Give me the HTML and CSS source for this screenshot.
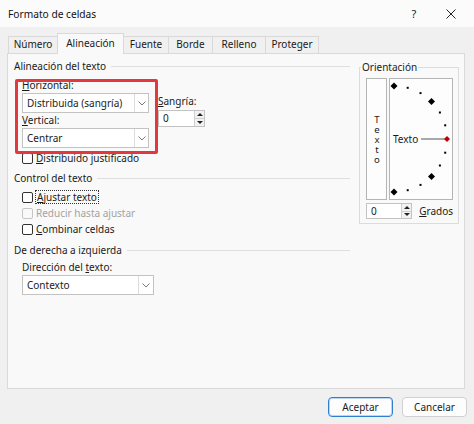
FILE: index.html
```html
<!DOCTYPE html>
<html lang="es">
<head>
<meta charset="utf-8">
<title>Formato de celdas</title>
<link rel="stylesheet" href="styles.css">
</head>
<body>
<div class="window">
  <div class="titlebar">
    <span class="title">Formato de celdas</span>
    <span class="help">?</span>
    <svg class="close" width="10" height="10" viewBox="0 0 10 10"><path d="M0.5 0.5 L9.5 9.5 M9.5 0.5 L0.5 9.5" stroke="#222" stroke-width="1" fill="none"/></svg>
  </div>
  <div class="tabs">
    <div class="tab t-num">Número</div>
    <div class="tab active t-ali">Alineación</div>
    <div class="tab t-fue">Fuente</div>
    <div class="tab t-bor">Borde</div>
    <div class="tab t-rel">Relleno</div>
    <div class="tab t-pro">Proteger</div>
  </div>
  <div class="panel">
    <div class="left">
      <div class="heading"><span>Alineación del texto</span><i class="rule"></i></div>
      <div class="align-row">
        <div class="highlight">
          <div class="lbl"><u>H</u>orizontal:</div>
          <div class="select sel-a"><span class="value">Distribuida (sangría)</span><span class="arrow"><svg width="8" height="5" viewBox="0 0 8 5"><path d="M0.5 0.5 L4 4 L7.5 0.5" stroke="#7a7a7a" fill="none"/></svg></span></div>
          <div class="lbl"><u>V</u>ertical:</div>
          <div class="select sel-a"><span class="value">Centrar</span><span class="arrow"><svg width="8" height="5" viewBox="0 0 8 5"><path d="M0.5 0.5 L4 4 L7.5 0.5" stroke="#7a7a7a" fill="none"/></svg></span></div>
        </div>
        <div class="indent-col">
          <div class="lbl"><u>S</u>angría:</div>
          <div class="spin sp-indent"><span class="val">0</span><span class="btns"><span class="up"></span><span class="down"></span></span></div>
        </div>
      </div>
      <div class="check first"><span class="box"></span><span><u>D</u>istribuido justificado</span></div>
      <div class="heading h2"><span>Control del texto</span><i class="rule"></i></div>
      <div class="check c-wrap"><span class="box"></span><span class="focus"><u>A</u>justar texto</span></div>
      <div class="check disabled"><span class="box"></span><span>Reducir hasta ajustar</span></div>
      <div class="check"><span class="box"></span><span><u>C</u>ombinar celdas</span></div>
      <div class="heading h3"><span>De derecha a izquierda</span><i class="rule"></i></div>
      <div class="lbl dir-lbl">Dirección del <u>t</u>exto:</div>
      <div class="select sel-b"><span class="value">Contexto</span><span class="arrow"><svg width="8" height="5" viewBox="0 0 8 5"><path d="M0.5 0.5 L4 4 L7.5 0.5" stroke="#7a7a7a" fill="none"/></svg></span></div>
    </div>
    <fieldset class="orient">
      <legend>Orientación</legend>
      <div class="orient-row">
        <div class="vert"><span class="vert-text">Texto</span></div>
        <div class="dial">
          <svg width="62" height="120" viewBox="0 0 62 120">
            <g fill="#000">
              <polygon points="4,3.5 7.5,7 4,10.5 0.5,7"/>
              <rect x="16.7" y="7.8" width="2" height="2"/>
              <rect x="29.5" y="13.1" width="2" height="2"/>
              <polygon points="41.5,19 45,22.5 41.5,26 38,22.5"/>
              <rect x="48.9" y="32.5" width="2" height="2"/>
              <rect x="54.2" y="45.3" width="2" height="2"/>
              <rect x="54.2" y="72.7" width="2" height="2"/>
              <rect x="48.9" y="85.5" width="2" height="2"/>
              <polygon points="41.5,94 45,97.5 41.5,101 38,97.5"/>
              <rect x="29.5" y="104.9" width="2" height="2"/>
              <rect x="16.7" y="110.2" width="2" height="2"/>
              <polygon points="4,109.5 7.5,113 4,116.5 0.5,113"/>
            </g>
            <text x="3" y="63.5" class="dial-text">Texto</text>
            <line x1="31" y1="60" x2="55" y2="60" stroke="#555" stroke-width="1"/>
            <polygon points="57,57 60,60 57,63 54,60" fill="#c00000"/>
          </svg>
        </div>
      </div>
      <div class="deg-row">
        <div class="spin sp-deg"><span class="val">0</span><span class="btns"><span class="up"></span><span class="down"></span></span></div>
        <span class="deg-lbl"><u>G</u>rados</span>
      </div>
    </fieldset>
  </div>
  <div class="footer">
    <button class="btn primary">Aceptar</button>
    <button class="btn">Cancelar</button>
  </div>
</div>
</body>
</html>
```
FILE: styles.css
```css
* { box-sizing: border-box; }
html, body { margin: 0; padding: 0; }
body {
  font-family: "Noto Sans", "Open Sans", sans-serif;
  font-size: 10px;
  color: #1b1b1b;
  background: #f0f0f0;
  width: 474px;
  height: 424px;
  overflow: hidden;
}
u { text-decoration-thickness: 1px; text-underline-offset: 1px; }

.window { width: 474px; height: 424px; background: #f0f0f0; }

.titlebar {
  height: 27px;
  background: #fbfbfb;
  display: flex;
  align-items: center;
  padding-left: 8px;
}
.title { flex: 1; font-size: 10.2px; color: #111; }
.help { width: 10px; text-align: center; font-size: 11px; color: #222; }
.close { margin: 0 18px 0 27px; }

.tabs {
  display: flex;
  align-items: flex-end;
  height: 26px;
  padding-left: 8px;
}
.tab {
  height: 17px;
  line-height: 15px;
  border: 1px solid #d9d9d9;
  border-bottom: 0;
  margin-right: -1px;
  background: #f0f0f0;
  text-align: center;
  white-space: nowrap;
}
.tab.active {
  height: 21px;
  line-height: 18px;
  margin-bottom: -1px;
  background: #f9f9f9;
  position: relative;
  z-index: 1;
}
.t-num { width: 50px; }
.t-ali { width: 67px; }
.t-fue { width: 46px; }
.t-bor { width: 45px; }
.t-rel { width: 54px; }
.t-pro { width: 54px; }

.panel {
  margin-left: 7px;
  width: 458px;
  height: 336px;
  border: 1px solid #d9d9d9;
  background: #f9f9f9;
  padding: 4px 5px 0 6px;
  display: flex;
  align-items: flex-start;
}
.left { width: 336px; flex: none; }

.heading { display: flex; align-items: center; height: 16px; line-height: 16px; white-space: nowrap; }
.heading .rule { flex: 1; height: 1px; background: #dedede; margin-left: 5px; }
.h2 { margin-top: 4px; }
.h3 { margin-top: 5px; }

.lbl { height: 15px; line-height: 15px; white-space: nowrap; }

.align-row { display: flex; margin-top: 4px; }
.highlight { position: relative; width: 127px; margin-left: 8px; }
.highlight::before {
  content: "";
  position: absolute;
  top: 1px; left: -7px; right: -9px; bottom: -6px;
  border: 3px solid #e2393f;
  border-radius: 2px;
  pointer-events: none;
}
.indent-col { margin-left: 9px; padding-top: 16px; }

.select {
  display: flex;
  height: 20px;
  border: 1px solid #c3c3c3;
  background: #fff;
}
.select .value { flex: 1; padding-left: 4px; line-height: 18px; white-space: nowrap; }
.select .arrow {
  width: 14px;
  border-left: 1px solid #dcdcdc;
  display: flex;
  align-items: center;
  justify-content: center;
}
.sel-a { width: 127px; }
.sel-b { width: 132px; margin-left: 8px; }
.sel-b .arrow { width: 15px; }
.dir-lbl { margin: 2px 0 0 8px; }

.spin {
  display: flex;
  height: 17px;
  border: 1px solid #c3c3c3;
  background: #fff;
}
.spin .val { flex: 1; padding-left: 4px; line-height: 15px; }
.spin .btns {
  width: 10px;
  display: flex;
  flex-direction: column;
  border-left: 1px solid #d0d0d0;
  background: #f2f2f2;
}
.spin .up, .spin .down {
  flex: 1;
  display: flex;
  align-items: center;
  justify-content: center;
}
.spin .up { border-bottom: 1px solid #d0d0d0; }
.spin .up::after {
  content: "";
  border-left: 3px solid transparent;
  border-right: 3px solid transparent;
  border-bottom: 3px solid #222;
}
.spin .down::after {
  content: "";
  border-left: 3px solid transparent;
  border-right: 3px solid transparent;
  border-top: 3px solid #222;
}
.sp-indent { width: 47px; margin-top: 1px; }
.sp-deg { width: 48px; }

.check {
  display: flex;
  align-items: center;
  height: 16px;
  margin-left: 8px;
  white-space: nowrap;
}
.check.first { margin-top: 2px; }
.c-wrap { margin-top: 3px; }
.box {
  width: 11px;
  height: 11px;
  border: 1px solid #333;
  border-radius: 2px;
  background: #fff;
  margin-right: 3px;
  flex: none;
}
.focus { border: 1px dotted #333; padding: 0 1px; line-height: 12px; margin-left: -1px; }
.check.disabled { color: #a3a3a3; }
.check.disabled .box { border-color: #c6c6c6; background: #f9f9f9; }

.orient {
  width: 100px;
  margin: 1px 0 0 9px;
  padding: 0 5px 4px 6px;
  border: 1px solid #dcdcdc;
  min-width: 0;
}
.orient legend {
  padding: 0 1px;
  margin-left: -5px;
  line-height: 16px;
  height: 16px;
}
.orient-row { display: flex; gap: 2px; margin-top: 3px; }
.vert {
  width: 21px;
  height: 122px;
  border: 1px solid #b5b5b5;
  background: #fdfdfd;
  display: flex;
  align-items: center;
  justify-content: center;
  padding-bottom: 3px;
}
.vert-text {
  writing-mode: vertical-lr;
  text-orientation: upright;
  font-size: 9.6px;
  line-height: 12px;
  letter-spacing: -3px;
}
.dial {
  width: 64px;
  height: 122px;
  border: 1px solid #b5b5b5;
  background: #fdfdfd;
}
.dial svg { display: block; }
.dial-text { font-family: "Noto Sans", sans-serif; font-size: 10px; fill: #1b1b1b; }
.deg-row { display: flex; align-items: center; margin-top: 3px; height: 16px; }
.deg-row .sp-deg { height: 16px; }
.deg-lbl { margin-left: 7px; }

.footer {
  display: flex;
  justify-content: flex-end;
  gap: 9px;
  padding: 8px 7px 0 0;
}
.btn {
  width: 65px;
  height: 20px;
  padding: 0;
  font-family: "Noto Sans", "Open Sans", sans-serif;
  font-size: 10px;
  color: #1b1b1b;
  background: #fdfdfd;
  border: 1px solid #d0d0d0;
  border-radius: 4px;
}
.btn.primary {
  border-color: #2f7fcf;
  box-shadow: inset 0 0 0 1px #b9d6f2;
}
```
